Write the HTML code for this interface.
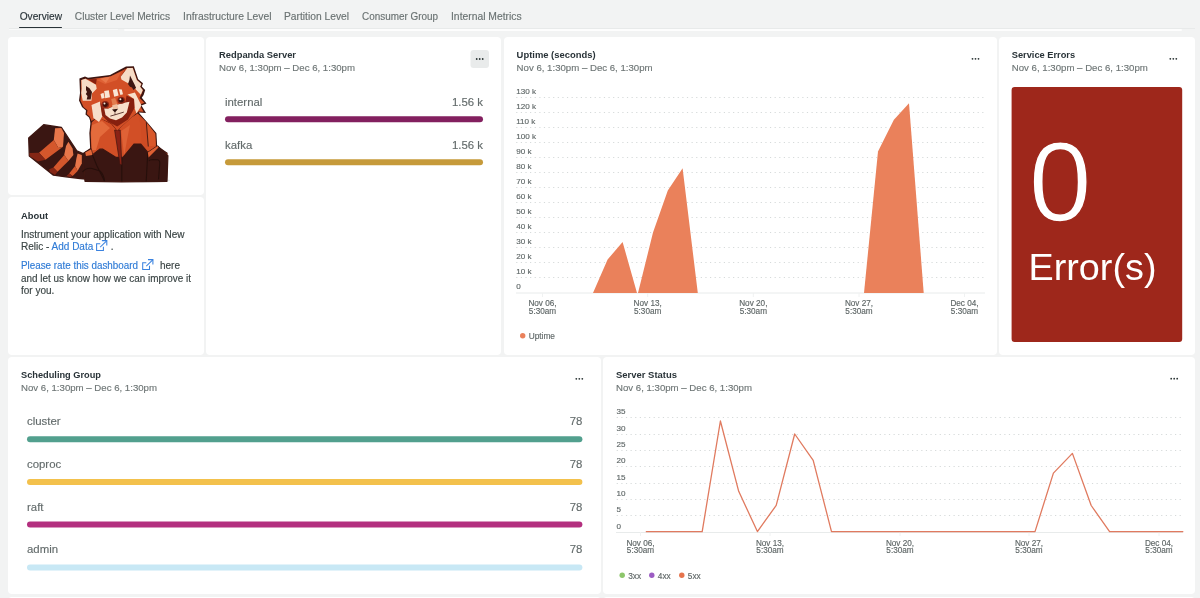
<!DOCTYPE html>
<html><head><meta charset="utf-8"><title>Redpanda Dashboard</title>
<style>
html,body{margin:0;padding:0;}
body{width:1200px;height:598px;overflow:hidden;background:#f2f3f3;font-family:"Liberation Sans", sans-serif;position:relative;}
.tabline{position:absolute;left:9px;top:28px;width:1186px;height:1px;background:#e8eaea;}
.tabw1{position:absolute;left:9px;top:29px;width:109px;height:1px;background:#f8f9f9;}
.tabw2{position:absolute;left:124px;top:29px;width:1058px;height:2px;background:#fdfdfd;border-radius:1px;}
.tabul{position:absolute;left:19px;top:26.7px;width:43px;height:1.8px;border-radius:1px;background:#293338;}
.card{position:absolute;background:#fff;border-radius:4px;}
svg.ov{position:absolute;left:0;top:0;will-change:transform;}
svg text{font-family:"Liberation Sans", sans-serif;}
</style></head><body>
<div class="tabline"></div><div class="tabw1"></div><div class="tabw2"></div>
<div class="tabul"></div>
<div class="card" style="left:8px;top:37px;width:196px;height:158px"></div><div class="card" style="left:8px;top:197px;width:196px;height:158px"></div><div class="card" style="left:206px;top:37px;width:295px;height:318px"></div><div class="card" style="left:504px;top:37px;width:493px;height:318px"></div><div class="card" style="left:999px;top:37px;width:196px;height:318px"></div><div class="card" style="left:8px;top:357px;width:593px;height:237px"></div><div class="card" style="left:603px;top:357px;width:592px;height:237px"></div><div class="card" style="left:8px;top:597px;width:593px;height:43px"></div><div class="card" style="left:603px;top:597px;width:592px;height:43px"></div>
<svg class="ov" width="1200" height="598" viewBox="0 0 1200 598">
<text x="19.7" y="20.3" font-size="10.1" fill="#293338" font-weight="400" text-anchor="start" stroke="#293338" stroke-width="0.15" textLength="42.3" lengthAdjust="spacingAndGlyphs">Overview</text>
<text x="74.8" y="20.3" font-size="10.1" fill="#6a7272" font-weight="400" text-anchor="start" stroke="#6a7272" stroke-width="0.15" textLength="95.2" lengthAdjust="spacingAndGlyphs">Cluster Level Metrics</text>
<text x="183" y="20.3" font-size="10.1" fill="#6a7272" font-weight="400" text-anchor="start" stroke="#6a7272" stroke-width="0.15" textLength="88.6" lengthAdjust="spacingAndGlyphs">Infrastructure Level</text>
<text x="284" y="20.3" font-size="10.1" fill="#6a7272" font-weight="400" text-anchor="start" stroke="#6a7272" stroke-width="0.15" textLength="65.0" lengthAdjust="spacingAndGlyphs">Partition Level</text>
<text x="362" y="20.3" font-size="10.1" fill="#6a7272" font-weight="400" text-anchor="start" stroke="#6a7272" stroke-width="0.15" textLength="76.0" lengthAdjust="spacingAndGlyphs">Consumer Group</text>
<text x="451" y="20.3" font-size="10.1" fill="#6a7272" font-weight="400" text-anchor="start" stroke="#6a7272" stroke-width="0.15" textLength="70.7" lengthAdjust="spacingAndGlyphs">Internal Metrics</text>
<text x="219" y="58.4" font-size="9.3" fill="#293338" font-weight="700" text-anchor="start" textLength="77" lengthAdjust="spacingAndGlyphs">Redpanda Server</text>
<text x="219" y="71.0" font-size="9.6" fill="#6e7676" font-weight="400" text-anchor="start" stroke="#6e7676" stroke-width="0.15" textLength="136" lengthAdjust="spacingAndGlyphs">Nov 6, 1:30pm – Dec 6, 1:30pm</text>
<text x="516.6" y="58.4" font-size="9.3" fill="#293338" font-weight="700" text-anchor="start" textLength="79" lengthAdjust="spacingAndGlyphs">Uptime (seconds)</text>
<text x="516.6" y="71.0" font-size="9.6" fill="#6e7676" font-weight="400" text-anchor="start" stroke="#6e7676" stroke-width="0.15" textLength="136" lengthAdjust="spacingAndGlyphs">Nov 6, 1:30pm – Dec 6, 1:30pm</text>
<text x="1011.8" y="58.4" font-size="9.3" fill="#293338" font-weight="700" text-anchor="start" textLength="63.3" lengthAdjust="spacingAndGlyphs">Service Errors</text>
<text x="1011.8" y="71.0" font-size="9.6" fill="#6e7676" font-weight="400" text-anchor="start" stroke="#6e7676" stroke-width="0.15" textLength="136" lengthAdjust="spacingAndGlyphs">Nov 6, 1:30pm – Dec 6, 1:30pm</text>
<text x="21" y="378.4" font-size="9.3" fill="#293338" font-weight="700" text-anchor="start" textLength="80" lengthAdjust="spacingAndGlyphs">Scheduling Group</text>
<text x="21" y="391.0" font-size="9.6" fill="#6e7676" font-weight="400" text-anchor="start" stroke="#6e7676" stroke-width="0.15" textLength="136" lengthAdjust="spacingAndGlyphs">Nov 6, 1:30pm – Dec 6, 1:30pm</text>
<text x="616" y="378.4" font-size="9.3" fill="#293338" font-weight="700" text-anchor="start" textLength="61" lengthAdjust="spacingAndGlyphs">Server Status</text>
<text x="616" y="391.0" font-size="9.6" fill="#6e7676" font-weight="400" text-anchor="start" stroke="#6e7676" stroke-width="0.15" textLength="136" lengthAdjust="spacingAndGlyphs">Nov 6, 1:30pm – Dec 6, 1:30pm</text>
<rect x="470.5" y="50" width="18.5" height="18" rx="3" fill="#e9ebeb"/>
<circle cx="476.7" cy="59" r="0.9" fill="#2a3434"/>
<circle cx="479.7" cy="59" r="0.9" fill="#2a3434"/>
<circle cx="482.7" cy="59" r="0.9" fill="#2a3434"/>
<circle cx="972.5" cy="58.8" r="0.9" fill="#2a3434"/>
<circle cx="975.5" cy="58.8" r="0.9" fill="#2a3434"/>
<circle cx="978.5" cy="58.8" r="0.9" fill="#2a3434"/>
<circle cx="1170.3" cy="58.8" r="0.9" fill="#2a3434"/>
<circle cx="1173.3" cy="58.8" r="0.9" fill="#2a3434"/>
<circle cx="1176.3" cy="58.8" r="0.9" fill="#2a3434"/>
<circle cx="576.3" cy="378.8" r="0.9" fill="#2a3434"/>
<circle cx="579.3" cy="378.8" r="0.9" fill="#2a3434"/>
<circle cx="582.3" cy="378.8" r="0.9" fill="#2a3434"/>
<circle cx="1171.2" cy="378.7" r="0.9" fill="#2a3434"/>
<circle cx="1174.2" cy="378.7" r="0.9" fill="#2a3434"/>
<circle cx="1177.2" cy="378.7" r="0.9" fill="#2a3434"/>
<line x1="228" y1="119.2" x2="480" y2="119.2" stroke="#83205f" stroke-width="6" stroke-linecap="round"/>
<text x="225" y="105.6" font-size="11.4" fill="#636b6b" font-weight="400" text-anchor="start" stroke="#636b6b" stroke-width="0.15" >internal</text>
<text x="483" y="105.6" font-size="11.4" fill="#636b6b" font-weight="400" text-anchor="end" stroke="#636b6b" stroke-width="0.15" >1.56 k</text>
<line x1="228" y1="162.2" x2="480" y2="162.2" stroke="#c69a3a" stroke-width="6" stroke-linecap="round"/>
<text x="225" y="148.7" font-size="11.4" fill="#636b6b" font-weight="400" text-anchor="start" stroke="#636b6b" stroke-width="0.15" >kafka</text>
<text x="483" y="148.7" font-size="11.4" fill="#636b6b" font-weight="400" text-anchor="end" stroke="#636b6b" stroke-width="0.15" >1.56 k</text>
<line x1="30" y1="439.3" x2="579.4" y2="439.3" stroke="#52a08e" stroke-width="6" stroke-linecap="round"/>
<text x="27" y="425.3" font-size="11.4" fill="#636b6b" font-weight="400" text-anchor="start" stroke="#636b6b" stroke-width="0.15" >cluster</text>
<text x="582.4" y="425.3" font-size="11.4" fill="#636b6b" font-weight="400" text-anchor="end" stroke="#636b6b" stroke-width="0.15" >78</text>
<line x1="30" y1="482" x2="579.4" y2="482" stroke="#f3c14c" stroke-width="6" stroke-linecap="round"/>
<text x="27" y="468.4" font-size="11.4" fill="#636b6b" font-weight="400" text-anchor="start" stroke="#636b6b" stroke-width="0.15" >coproc</text>
<text x="582.4" y="468.4" font-size="11.4" fill="#636b6b" font-weight="400" text-anchor="end" stroke="#636b6b" stroke-width="0.15" >78</text>
<line x1="30" y1="524.5" x2="579.4" y2="524.5" stroke="#b3307f" stroke-width="6" stroke-linecap="round"/>
<text x="27" y="510.6" font-size="11.4" fill="#636b6b" font-weight="400" text-anchor="start" stroke="#636b6b" stroke-width="0.15" >raft</text>
<text x="582.4" y="510.6" font-size="11.4" fill="#636b6b" font-weight="400" text-anchor="end" stroke="#636b6b" stroke-width="0.15" >78</text>
<line x1="30" y1="567.4" x2="579.4" y2="567.4" stroke="#c8e8f5" stroke-width="6" stroke-linecap="round"/>
<text x="27" y="553.4" font-size="11.4" fill="#636b6b" font-weight="400" text-anchor="start" stroke="#636b6b" stroke-width="0.15" >admin</text>
<text x="582.4" y="553.4" font-size="11.4" fill="#636b6b" font-weight="400" text-anchor="end" stroke="#636b6b" stroke-width="0.15" >78</text>
<text x="21" y="218.7" font-size="9.4" fill="#293338" font-weight="700" text-anchor="start" >About</text>
<text x="21" y="237.6" font-size="10" fill="#3a4444" font-weight="400" text-anchor="start" stroke="#3a4444" stroke-width="0.15" >Instrument your application with New</text>
<text x="21" y="249.7" font-size="10" fill="#3a4444" stroke="#3a4444" stroke-width="0.15">Relic - <tspan fill="#2f7bd6" stroke="#2f7bd6">Add Data</tspan></text>
<text x="21" y="268.9" font-size="10" fill="#2f7bd6" font-weight="400" text-anchor="start" stroke="#2f7bd6" stroke-width="0.15" textLength="117" lengthAdjust="spacingAndGlyphs">Please rate this dashboard</text>
<text x="160" y="268.8" font-size="10" fill="#3a4444" font-weight="400" text-anchor="start" stroke="#3a4444" stroke-width="0.15" >here</text>
<text x="21" y="281.6" font-size="10" fill="#3a4444" font-weight="400" text-anchor="start" stroke="#3a4444" stroke-width="0.15" textLength="170" lengthAdjust="spacingAndGlyphs">and let us know how we can improve it</text>
<text x="21" y="293.6" font-size="10" fill="#3a4444" font-weight="400" text-anchor="start" stroke="#3a4444" stroke-width="0.15" >for you.</text>
<g fill="none" stroke="#3a82df" stroke-width="1.05" stroke-linecap="square"><path d="M99.70 243.70H96.60V250.40H103.40V247.30"/><path d="M102.40 240.60H106.80V244.90"/><path d="M100.50 246.80L106.50 240.90"/></g>
<text x="110.8" y="249.7" font-size="10" fill="#3a4444" font-weight="400" text-anchor="start" stroke="#3a4444" stroke-width="0.15" >.</text>
<g fill="none" stroke="#3a82df" stroke-width="1.05" stroke-linecap="square"><path d="M145.80 262.70H142.70V269.40H149.50V266.30"/><path d="M148.50 259.60H152.90V263.90"/><path d="M146.60 265.80L152.60 259.90"/></g>
<text x="516.2" y="288.8" font-size="8.1" fill="#5f6767" font-weight="400" text-anchor="start" stroke="#5f6767" stroke-width="0.15" >0</text>
<text x="516.2" y="273.8" font-size="8.1" fill="#5f6767" font-weight="400" text-anchor="start" stroke="#5f6767" stroke-width="0.15" >10 k</text>
<line x1="516.2" y1="277.5" x2="984.5" y2="277.5" stroke="#d6dada" stroke-width="1" stroke-dasharray="1.2 3.414"/>
<text x="516.2" y="258.8" font-size="8.1" fill="#5f6767" font-weight="400" text-anchor="start" stroke="#5f6767" stroke-width="0.15" >20 k</text>
<line x1="516.2" y1="262.5" x2="984.5" y2="262.5" stroke="#d6dada" stroke-width="1" stroke-dasharray="1.2 3.414"/>
<text x="516.2" y="243.8" font-size="8.1" fill="#5f6767" font-weight="400" text-anchor="start" stroke="#5f6767" stroke-width="0.15" >30 k</text>
<line x1="516.2" y1="247.5" x2="984.5" y2="247.5" stroke="#d6dada" stroke-width="1" stroke-dasharray="1.2 3.414"/>
<text x="516.2" y="228.8" font-size="8.1" fill="#5f6767" font-weight="400" text-anchor="start" stroke="#5f6767" stroke-width="0.15" >40 k</text>
<line x1="516.2" y1="232.5" x2="984.5" y2="232.5" stroke="#d6dada" stroke-width="1" stroke-dasharray="1.2 3.414"/>
<text x="516.2" y="213.8" font-size="8.1" fill="#5f6767" font-weight="400" text-anchor="start" stroke="#5f6767" stroke-width="0.15" >50 k</text>
<line x1="516.2" y1="217.5" x2="984.5" y2="217.5" stroke="#d6dada" stroke-width="1" stroke-dasharray="1.2 3.414"/>
<text x="516.2" y="198.8" font-size="8.1" fill="#5f6767" font-weight="400" text-anchor="start" stroke="#5f6767" stroke-width="0.15" >60 k</text>
<line x1="516.2" y1="202.5" x2="984.5" y2="202.5" stroke="#d6dada" stroke-width="1" stroke-dasharray="1.2 3.414"/>
<text x="516.2" y="183.8" font-size="8.1" fill="#5f6767" font-weight="400" text-anchor="start" stroke="#5f6767" stroke-width="0.15" >70 k</text>
<line x1="516.2" y1="187.5" x2="984.5" y2="187.5" stroke="#d6dada" stroke-width="1" stroke-dasharray="1.2 3.414"/>
<text x="516.2" y="168.8" font-size="8.1" fill="#5f6767" font-weight="400" text-anchor="start" stroke="#5f6767" stroke-width="0.15" >80 k</text>
<line x1="516.2" y1="172.5" x2="984.5" y2="172.5" stroke="#d6dada" stroke-width="1" stroke-dasharray="1.2 3.414"/>
<text x="516.2" y="153.8" font-size="8.1" fill="#5f6767" font-weight="400" text-anchor="start" stroke="#5f6767" stroke-width="0.15" >90 k</text>
<line x1="516.2" y1="157.5" x2="984.5" y2="157.5" stroke="#d6dada" stroke-width="1" stroke-dasharray="1.2 3.414"/>
<text x="516.2" y="138.8" font-size="8.1" fill="#5f6767" font-weight="400" text-anchor="start" stroke="#5f6767" stroke-width="0.15" >100 k</text>
<line x1="516.2" y1="142.5" x2="984.5" y2="142.5" stroke="#d6dada" stroke-width="1" stroke-dasharray="1.2 3.414"/>
<text x="516.2" y="123.8" font-size="8.1" fill="#5f6767" font-weight="400" text-anchor="start" stroke="#5f6767" stroke-width="0.15" >110 k</text>
<line x1="516.2" y1="127.5" x2="984.5" y2="127.5" stroke="#d6dada" stroke-width="1" stroke-dasharray="1.2 3.414"/>
<text x="516.2" y="108.8" font-size="8.1" fill="#5f6767" font-weight="400" text-anchor="start" stroke="#5f6767" stroke-width="0.15" >120 k</text>
<line x1="516.2" y1="112.5" x2="984.5" y2="112.5" stroke="#d6dada" stroke-width="1" stroke-dasharray="1.2 3.414"/>
<text x="516.2" y="93.8" font-size="8.1" fill="#5f6767" font-weight="400" text-anchor="start" stroke="#5f6767" stroke-width="0.15" >130 k</text>
<line x1="516.2" y1="97.5" x2="984.5" y2="97.5" stroke="#d6dada" stroke-width="1" stroke-dasharray="1.2 3.414"/>
<line x1="516" y1="293" x2="985" y2="293" stroke="#e8ebeb" stroke-width="1"/>
<line x1="542.5" y1="293" x2="542.5" y2="297" stroke="#f0f2f2" stroke-width="1"/>
<text x="542.5" y="306" font-size="8.2" fill="#5f6767" font-weight="400" text-anchor="middle" stroke="#5f6767" stroke-width="0.15" >Nov 06,</text>
<text x="542.5" y="314" font-size="8.2" fill="#5f6767" font-weight="400" text-anchor="middle" stroke="#5f6767" stroke-width="0.15" >5:30am</text>
<line x1="647.7" y1="293" x2="647.7" y2="297" stroke="#f0f2f2" stroke-width="1"/>
<text x="647.7" y="306" font-size="8.2" fill="#5f6767" font-weight="400" text-anchor="middle" stroke="#5f6767" stroke-width="0.15" >Nov 13,</text>
<text x="647.7" y="314" font-size="8.2" fill="#5f6767" font-weight="400" text-anchor="middle" stroke="#5f6767" stroke-width="0.15" >5:30am</text>
<line x1="753.3" y1="293" x2="753.3" y2="297" stroke="#f0f2f2" stroke-width="1"/>
<text x="753.3" y="306" font-size="8.2" fill="#5f6767" font-weight="400" text-anchor="middle" stroke="#5f6767" stroke-width="0.15" >Nov 20,</text>
<text x="753.3" y="314" font-size="8.2" fill="#5f6767" font-weight="400" text-anchor="middle" stroke="#5f6767" stroke-width="0.15" >5:30am</text>
<line x1="859" y1="293" x2="859" y2="297" stroke="#f0f2f2" stroke-width="1"/>
<text x="859" y="306" font-size="8.2" fill="#5f6767" font-weight="400" text-anchor="middle" stroke="#5f6767" stroke-width="0.15" >Nov 27,</text>
<text x="859" y="314" font-size="8.2" fill="#5f6767" font-weight="400" text-anchor="middle" stroke="#5f6767" stroke-width="0.15" >5:30am</text>
<line x1="964.5" y1="293" x2="964.5" y2="297" stroke="#f0f2f2" stroke-width="1"/>
<text x="964.5" y="306" font-size="8.2" fill="#5f6767" font-weight="400" text-anchor="middle" stroke="#5f6767" stroke-width="0.15" >Dec 04,</text>
<text x="964.5" y="314" font-size="8.2" fill="#5f6767" font-weight="400" text-anchor="middle" stroke="#5f6767" stroke-width="0.15" >5:30am</text>
<polygon points="593,293 607.6,259.5 622.6,242 637,293 638,293 653,232.6 667.8,190.4 682.6,168.2 697.8,293" fill="#ea815b"/>
<polygon points="864,293 878,151.4 893.9,119.8 909,103.3 923.7,293" fill="#ea815b"/>
<circle cx="522.7" cy="335.8" r="2.7" fill="#ea815b"/>
<text x="528.7" y="339" font-size="8.3" fill="#5f6767" font-weight="400" text-anchor="start" stroke="#5f6767" stroke-width="0.15" >Uptime</text>
<rect x="1011.6" y="87" width="170.6" height="255" rx="3" fill="#9e271b"/>
<text x="1028.85" y="220.75" font-size="113" fill="#ffffff" stroke="#9e271b" stroke-width="1.4">0</text>
<text x="1028.5" y="279.8" font-size="36" fill="#ffffff" font-weight="400" text-anchor="start" textLength="128" lengthAdjust="spacingAndGlyphs">Error(s)</text>
<text x="616.4" y="528.8" font-size="8.1" fill="#5f6767" font-weight="400" text-anchor="start" stroke="#5f6767" stroke-width="0.15" >0</text>
<text x="616.4" y="511.8" font-size="8.1" fill="#5f6767" font-weight="400" text-anchor="start" stroke="#5f6767" stroke-width="0.15" >5</text>
<line x1="616.7" y1="515.5" x2="1182.5" y2="515.5" stroke="#d6dada" stroke-width="1" stroke-dasharray="1.2 3.414"/>
<text x="616.4" y="495.8" font-size="8.1" fill="#5f6767" font-weight="400" text-anchor="start" stroke="#5f6767" stroke-width="0.15" >10</text>
<line x1="616.7" y1="499.5" x2="1182.5" y2="499.5" stroke="#d6dada" stroke-width="1" stroke-dasharray="1.2 3.414"/>
<text x="616.4" y="479.8" font-size="8.1" fill="#5f6767" font-weight="400" text-anchor="start" stroke="#5f6767" stroke-width="0.15" >15</text>
<line x1="616.7" y1="483.5" x2="1182.5" y2="483.5" stroke="#d6dada" stroke-width="1" stroke-dasharray="1.2 3.414"/>
<text x="616.4" y="462.8" font-size="8.1" fill="#5f6767" font-weight="400" text-anchor="start" stroke="#5f6767" stroke-width="0.15" >20</text>
<line x1="616.7" y1="466.5" x2="1182.5" y2="466.5" stroke="#d6dada" stroke-width="1" stroke-dasharray="1.2 3.414"/>
<text x="616.4" y="446.8" font-size="8.1" fill="#5f6767" font-weight="400" text-anchor="start" stroke="#5f6767" stroke-width="0.15" >25</text>
<line x1="616.7" y1="450.5" x2="1182.5" y2="450.5" stroke="#d6dada" stroke-width="1" stroke-dasharray="1.2 3.414"/>
<text x="616.4" y="430.8" font-size="8.1" fill="#5f6767" font-weight="400" text-anchor="start" stroke="#5f6767" stroke-width="0.15" >30</text>
<line x1="616.7" y1="434.5" x2="1182.5" y2="434.5" stroke="#d6dada" stroke-width="1" stroke-dasharray="1.2 3.414"/>
<text x="616.4" y="413.8" font-size="8.1" fill="#5f6767" font-weight="400" text-anchor="start" stroke="#5f6767" stroke-width="0.15" >35</text>
<line x1="616.7" y1="417.5" x2="1182.5" y2="417.5" stroke="#d6dada" stroke-width="1" stroke-dasharray="1.2 3.414"/>
<line x1="616" y1="532.5" x2="1183" y2="532.5" stroke="#e8ebeb" stroke-width="1"/>
<line x1="640.5" y1="532" x2="640.5" y2="536" stroke="#f0f2f2" stroke-width="1"/>
<text x="640.5" y="545.8" font-size="8.2" fill="#5f6767" font-weight="400" text-anchor="middle" stroke="#5f6767" stroke-width="0.15" >Nov 06,</text>
<text x="640.5" y="553.3" font-size="8.2" fill="#5f6767" font-weight="400" text-anchor="middle" stroke="#5f6767" stroke-width="0.15" >5:30am</text>
<line x1="770" y1="532" x2="770" y2="536" stroke="#f0f2f2" stroke-width="1"/>
<text x="770" y="545.8" font-size="8.2" fill="#5f6767" font-weight="400" text-anchor="middle" stroke="#5f6767" stroke-width="0.15" >Nov 13,</text>
<text x="770" y="553.3" font-size="8.2" fill="#5f6767" font-weight="400" text-anchor="middle" stroke="#5f6767" stroke-width="0.15" >5:30am</text>
<line x1="900" y1="532" x2="900" y2="536" stroke="#f0f2f2" stroke-width="1"/>
<text x="900" y="545.8" font-size="8.2" fill="#5f6767" font-weight="400" text-anchor="middle" stroke="#5f6767" stroke-width="0.15" >Nov 20,</text>
<text x="900" y="553.3" font-size="8.2" fill="#5f6767" font-weight="400" text-anchor="middle" stroke="#5f6767" stroke-width="0.15" >5:30am</text>
<line x1="1029" y1="532" x2="1029" y2="536" stroke="#f0f2f2" stroke-width="1"/>
<text x="1029" y="545.8" font-size="8.2" fill="#5f6767" font-weight="400" text-anchor="middle" stroke="#5f6767" stroke-width="0.15" >Nov 27,</text>
<text x="1029" y="553.3" font-size="8.2" fill="#5f6767" font-weight="400" text-anchor="middle" stroke="#5f6767" stroke-width="0.15" >5:30am</text>
<line x1="1159" y1="532" x2="1159" y2="536" stroke="#f0f2f2" stroke-width="1"/>
<text x="1159" y="545.8" font-size="8.2" fill="#5f6767" font-weight="400" text-anchor="middle" stroke="#5f6767" stroke-width="0.15" >Dec 04,</text>
<text x="1159" y="553.3" font-size="8.2" fill="#5f6767" font-weight="400" text-anchor="middle" stroke="#5f6767" stroke-width="0.15" >5:30am</text>
<polyline points="645.8,531.6 702.2,531.6 720.4,421 738.7,491.3 757.4,531.6 776.2,505.4 794.7,434 813.2,460.4 831.5,531.6 1035,531.6 1053.4,473.1 1072.4,453.4 1091.2,505.5 1109.6,531.6 1183.3,531.6" fill="none" stroke="#e07a5f" stroke-width="1.3" stroke-linejoin="round"/>
<circle cx="622.2" cy="575.3" r="2.7" fill="#8dc66b"/>
<text x="628.2" y="578.5" font-size="8.3" fill="#5f6767" font-weight="400" text-anchor="start" stroke="#5f6767" stroke-width="0.15" >3xx</text>
<circle cx="651.8" cy="575.3" r="2.7" fill="#9c5cc3"/>
<text x="657.8" y="578.5" font-size="8.3" fill="#5f6767" font-weight="400" text-anchor="start" stroke="#5f6767" stroke-width="0.15" >4xx</text>
<circle cx="681.8" cy="575.3" r="2.7" fill="#e6744d"/>
<text x="687.8" y="578.5" font-size="8.3" fill="#5f6767" font-weight="400" text-anchor="start" stroke="#5f6767" stroke-width="0.15" >5xx</text>
<g id="logo" stroke-linejoin="round">
<ellipse cx="150" cy="180.5" rx="20" ry="2" fill="#e8e8e8"/>
<!-- tail -->
<polygon points="28.7,138.1 43.7,124.7 61.5,127.5 76.8,150.9 84.3,154.2 86,179 80.1,178.5 65.9,176.8 53.4,175.2 45,168.5 29.3,156.1" fill="#3a1612" stroke="#3d1611" stroke-width="1.3"/>
<polygon points="55.1,128.3 61.3,127.9 64,133 63,146.7 58.4,148.1 53.8,140.1" fill="#e8764a"/>
<polygon points="53.8,140.1 58.4,148.1 63,146.7 45.5,159.8 39,152.8" fill="#d4572c"/>
<polygon points="29.5,153.1 39,152.8 45.5,159.8 38,161.5 29.5,156" fill="#842615"/>
<polygon points="68.4,141.7 72.6,148.4 73.4,155.1 68.4,160.9 64.2,155.1 66,146" fill="#e8764a"/>
<polygon points="64.2,155.1 68.4,160.9 57.5,171.8 53.4,167.6" fill="#d4572c"/>
<polygon points="49.2,169.3 53.4,167.6 57.5,171.8 55,175 50,172" fill="#842615"/>
<polygon points="77.6,153.4 81.8,155.1 81.8,163.4 77.6,171 75.1,166 76.5,158" fill="#e8764a"/>
<polygon points="75.1,166 77.6,171 72.6,176 69.2,173.5" fill="#d4572c"/>
<polygon points="66.5,176 69.2,173.5 72.6,176 70,177.3" fill="#842615"/>
<!-- body -->
<polygon points="91,119 104,116 114,124 122,124 136,110 138.2,113 146.3,122.1 155.8,133.5 156.5,146 167.5,153.5 167,180.8 121.5,182 85,180.8 82.5,154 90.8,148.5 90,133 91,124" fill="#d24f26"/>
<polyline points="91,119 91,124 90,133 90.8,148.5 82.5,154" fill="none" stroke="#3d1611" stroke-width="1.3"/>
<polyline points="136,110 138.2,113 146.3,122.1 155.8,133.5 156.5,146 167.5,153.5" fill="none" stroke="#3d1611" stroke-width="1.3"/>
<polygon points="92,125 102,121 110,128 100,137 96,150 91.8,150 91,133" fill="#e46b3c"/>
<polygon points="121.2,131.1 130,125 127,140 124.2,156.2" fill="#df6236"/>
<polygon points="138.5,114.5 146.3,122.1 148.3,146.2 142,150 141,128" fill="#cf4c24"/>
<polygon points="146.3,122.1 155.2,133.6 155.8,145.8 148.3,146.2" fill="#d9582b"/>
<polyline points="146.3,122.1 148.3,146.5" fill="none" stroke="#3d1611" stroke-width="0.9"/>
<!-- dark lower body -->
<polygon points="82.5,154.5 85.2,152.4 91.2,149.2 92.4,154.9 99.7,149.2 102.9,149.2 115.7,157.3 123,157.3 134.2,144 140.6,144 147.8,152.4 157.5,146 167.9,155.7 167,181.3 121.5,181.8 85,181.3" fill="#3a1612" stroke="#3d1611" stroke-width="1.2"/>
<polygon points="85.2,152.4 91.2,149.2 92.4,154.9 86,156" fill="#e2683a"/>
<polyline points="92.4,154.9 97,166 104.5,181" fill="none" stroke="#260f0b" stroke-width="1.1"/>
<path d="M82.5,172 Q86,167.5 92,168.5 L100,171 Q104,175 104.5,181" fill="none" stroke="#260f0b" stroke-width="1.1"/>
<polyline points="121.8,158 121.8,181.5" fill="none" stroke="#260f0b" stroke-width="1.1"/>
<polyline points="147.8,152.4 146.2,181.3" fill="none" stroke="#260f0b" stroke-width="1.1"/>
<path d="M148.8,161 Q150,159.5 153,159.5 L158,159.7 Q160,160.5 159.8,163 L158.5,179.5" fill="none" stroke="#260f0b" stroke-width="1.1"/>
<polygon points="147.8,152.4 157.5,146 158.5,147.6 148.6,157.5" fill="#dc5f33"/>
<!-- center dark red wedge -->
<polygon points="114.6,130 120.2,130 121.8,164.5 120,164.5" fill="#8a2215" stroke="#3d1611" stroke-width="0.7"/>
<!-- neck mask -->
<polygon points="99,108 103.1,120 111.1,124.1 117.2,131.1 130.2,117.1 132.2,106" fill="#86200f"/>
<!-- head outline -->
<polygon points="79.4,78.5 85,76.5 88,77.8 110,75 126,66.6 133.8,66.2 138.2,79.2 143,83.2 141.8,86.6 145.2,90 143.6,95 141.8,97.8 146.5,103.5 141.5,105.5 146,113 139,112.5 131.5,117.5 117.2,130.5 111.5,123.5 104.5,120.3 97,117.4 91,123 89,117.5 85.5,114.5 86,110.5 82,107 79,100.5 80,93" fill="#3d1611"/>
<!-- head orange -->
<polygon points="81,80.2 85.4,78.5 88,79.5 110.5,76.6 126.8,68.2 132.8,67.8 137,80 141.5,84 140.2,86.8 143,90.2 141,95 139.5,98 144.5,102.8 139.5,104.8 143.5,111.8 138.5,111.4 131.5,117.5 117.2,130.5 111.5,123.5 104.5,120.3 97,117.4 91.5,121 89.8,116.8 86.8,114 87.5,110.3 83.5,107 80.5,100.5 81.3,93" fill="#d24f26"/>
<!-- top head lighter -->
<polygon points="96.5,80 110.5,76.6 121,72 117,80 105,84" fill="#df6135"/>
<polygon points="100,78.5 110,76.8 106,83" fill="#e9784a"/>
<!-- ear shadows -->
<polygon points="88,79.3 96.7,79 96,84.7" fill="#86200f"/>
<polygon points="120.7,76.7 126,68.5 121.4,79.4" fill="#86200f"/>
<!-- ears -->
<polygon points="81.4,80 85.4,78.7 96,84.7 96.7,88.8 92,93.4 91.4,100.8 82.7,100.8 81.2,93 81.7,88.8" fill="#f6dcc6"/>
<polygon points="86,86.1 89.5,88.3 92,92.1 90.7,99.5 86.7,99.5 87.5,96 85.8,94 87,92 86,90" fill="#3d1611"/>
<polygon points="127.4,68 132.7,68 136.8,80 141.4,84 140.1,86.8 142.8,90.1 140.8,94.8 132,85.4 121.4,79.4 120.7,76.7" fill="#f6dcc6"/>
<polygon points="130,75.4 132,79.4 134.7,84.7 136.1,88.1 133.4,90.1 132,87.4 130,86.8 128,84.1 129.4,80" fill="#3d1611"/>
<!-- forehead white marks -->
<polygon points="100.5,94 103.6,92.8 104.6,98 101.6,98.8" fill="#f9e6d6"/>
<polygon points="104.2,91 108.8,90.2 110,97.2 105.2,98.2" fill="#f9e6d6"/>
<polygon points="112.8,90 117,88.8 118.6,95.6 114.2,96.8" fill="#f9e6d6"/>
<polygon points="118.8,89.3 121.8,89.4 123,94.2 120.4,95" fill="#f9e6d6"/>
<!-- cheek white -->
<polygon points="91.5,105 100,101.5 102.5,116 99,122 93.4,118" fill="#f7dfca"/>
<polygon points="127.5,94.5 134.9,92.6 141.5,105.5 136.5,113.5 134.5,108 134,99" fill="#f7dfca"/>
<!-- mask -->
<polygon points="100,101.5 102,115.5 108,121.5 117.2,126.5 128,119.5 134.5,108 134,99 126.5,95.5 125.5,101.5 117,104.5 108,108.5 102.5,107.5" fill="#86200f"/>
<!-- muzzle cream -->
<polygon points="104.2,108.5 105.5,115 110,118.5 116,120.2 122,117.5 126.8,112.5 129.5,101.8 125.5,102.5 117,104.8 108,108.8" fill="#f7dfca"/>
<polygon points="111.2,99 115.2,98 117.4,104.2 112.8,106.2" fill="#e27d4f"/>
<polygon points="112,105.6 117.2,104 118.4,108.4 113,109" fill="#efc0a0"/>
<!-- eyes -->
<ellipse cx="105.3" cy="104.6" rx="3.8" ry="3.5" fill="#8b2415"/>
<ellipse cx="121.2" cy="100.2" rx="3.8" ry="3.5" fill="#8b2415"/>
<ellipse cx="105.3" cy="104.6" rx="2.5" ry="2.4" fill="#3d0f0a"/>
<ellipse cx="121.2" cy="100.2" rx="2.5" ry="2.4" fill="#3d0f0a"/>
<circle cx="104.5" cy="103.6" r="1" fill="#f6e2d2"/>
<circle cx="120.4" cy="99.2" r="1" fill="#f6e2d2"/>
<!-- nose & mouth -->
<polygon points="112,109.6 118.1,108.7 115,112.6" fill="#2b100c"/>
<polyline points="110.4,116.1 115,114.8 123.8,112.1" fill="none" stroke="#3d1611" stroke-width="0.8"/>
<line x1="115" y1="112.4" x2="115" y2="114.8" stroke="#3d1611" stroke-width="0.6"/>
</g>

</svg>
</body></html>
